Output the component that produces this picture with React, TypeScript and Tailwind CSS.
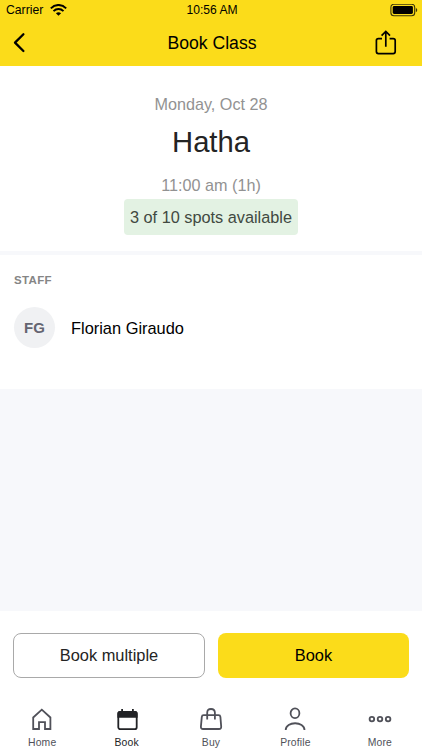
import type { ReactNode } from 'react'

type TabProps = {
  label: string
  active?: boolean
  children: ReactNode
}

function Tab({ label, active, children }: TabProps) {
  return (
    <button
      className={`flex flex-1 flex-col items-center ${active ? 'text-[#222326]' : 'text-[#505159]'}`}
    >
      <svg viewBox="0 0 28 28" className="h-7 w-7" fill="none" stroke="currentColor" strokeWidth="1.8">
        {children}
      </svg>
      <span className="mt-[2px] text-[10.4px] leading-4 tracking-[0.15px]">{label}</span>
    </button>
  )
}

function StatusBar() {
  return (
    <div className="flex h-5 items-center justify-between pl-[6px] pr-1">
      <div className="flex flex-1 items-center text-[12.2px]">
        Carrier
        <svg viewBox="0 0 17 12" className="ml-[7px] h-3 w-[17px]" fill="none" stroke="#000" strokeWidth="1.9">
          <path d="M0.8 4.3C5.2 -0.2 11.8 -0.2 16.2 4.3" />
          <path d="M3.5 7.1C6.4 4.2 10.6 4.2 13.5 7.1" />
          <path d="M5.9 9.2C7.5 7.8 9.5 7.8 11.1 9.2L8.5 11.8Z" fill="#000" stroke="none" />
        </svg>
      </div>
      <div className="text-[12.1px]">10:56 AM</div>
      <div className="flex flex-1 justify-end">
        <svg viewBox="0 0 28 13" className="h-[13px] w-7">
          <rect x="0.9" y="0.3" width="23.8" height="11.4" rx="3" fill="none" stroke="#3b3509" strokeWidth="1.1" />
          <rect x="2.7" y="2" width="20.2" height="8" rx="1.4" fill="#000" />
          <path d="M25.9 3.9C27.7 4.5 27.7 7.5 25.9 8.1Z" fill="#3b3509" />
        </svg>
      </div>
    </div>
  )
}

export default function App() {
  return (
    <div className="flex h-[750px] w-[422px] flex-col overflow-hidden bg-[#f7f8fb] font-['Liberation_Sans',Arial,sans-serif] text-black">
      <header className="h-[66px] shrink-0 bg-[#fbdc1a]">
        <StatusBar />
        <div className="flex h-[46px] items-center justify-between">
          <button className="w-[82px] pl-3">
            <svg viewBox="0 0 16 22" className="h-[22px] w-4" fill="none" stroke="#000" strokeWidth="2.3">
              <path d="M11.4 2.2L3 10.6L11.4 19" strokeLinecap="round" strokeLinejoin="round" />
            </svg>
          </button>
          <h1 className="text-[17.6px]">Book Class</h1>
          <button className="flex w-20 justify-end pr-[25px]">
            <svg viewBox="0 0 22 26" className="h-[26px] w-[22px]" fill="none" stroke="#000" strokeWidth="1.7">
              <path d="M7 8.6H3.4Q1.4 8.6 1.4 10.6V21.6Q1.4 23.6 3.4 23.6H18.2Q20.2 23.6 20.2 21.6V10.6Q20.2 8.6 18.2 8.6H14.6" />
              <path d="M10.8 16.8V1.8M6.6 5.7L10.8 1.5L15 5.7" />
            </svg>
          </button>
        </div>
      </header>

      <section className="flex h-[185px] shrink-0 flex-col items-center bg-white pt-7">
        <p className="text-[16.2px] leading-5 text-[#929292]">Monday, Oct 28</p>
        <h2 className="mt-[10px] text-[29.2px] leading-9 text-[#242424]">Hatha</h2>
        <p className="mt-[15px] text-[16.2px] leading-5 text-[#929292]">11:00 am (1h)</p>
        <p className="mt-1 h-[36px] w-[174px] rounded-[4px] bg-[#e3f2e3] text-center text-[16.3px] leading-9 whitespace-nowrap text-[#414941]">
          3 of 10 spots available
        </p>
      </section>

      <section className="mt-1 h-[134px] shrink-0 bg-white px-[14px] pt-[17px]">
        <h3 className="text-[11.5px] leading-4 font-bold tracking-[0.35px] text-[#858585]">STAFF</h3>
        <div className="mt-[19px] flex items-center">
          <div className="flex h-[41px] w-[41px] items-center justify-center rounded-full bg-[#f0f1f3] pt-[2px] text-[15px] font-bold text-[#646571]">
            FG
          </div>
          <span className="ml-4 pt-[2px] text-[16.4px]">Florian Giraudo</span>
        </div>
      </section>

      <footer className="mt-auto h-[139px] shrink-0 bg-white">
        <div className="flex gap-[13px] px-[13px] pt-[22px] text-[16.4px]">
          <button className="h-[45px] w-[192px] rounded-lg border border-[#a9a9a9] text-[#242424]">
            Book multiple
          </button>
          <button className="h-[45px] w-[191px] rounded-lg bg-[#fbdc1a]">Book</button>
        </div>
        <nav className="mt-[27px] flex">
          <Tab label="Home">
            <path d="M5.2 12.5L13.8 4.6L22.4 12.5V24H17V17.2H11V24H5.2Z" />
          </Tab>
          <Tab label="Book" active>
            <rect x="5.3" y="6.9" width="18.4" height="17.3" rx="2" />
            <path
              d="M4.4 8.5Q4.4 6 6.9 6H8.2V4H10V6H19V4H20.8V6H22.1Q24.6 6 24.6 8.5V12.8H4.4Z"
              fill="currentColor"
              stroke="none"
            />
          </Tab>
          <Tab label="Buy">
            <path d="M6.6 10.2H21.5Q23.2 10.2 23.4 11.9L24.2 21.6Q24.3 24 22.1 24H6Q3.8 24 3.9 21.6L4.8 11.9Q5 10.2 6.6 10.2Z" />
            <path d="M10.2 14.6V7.8Q10.2 4 14 4Q17.9 4 17.9 7.8V14.6" />
          </Tab>
          <Tab label="Profile">
            <ellipse cx="14" cy="8.3" rx="4.4" ry="4.9" />
            <path d="M4.7 25C4.7 16 23.5 16 23.5 25" />
          </Tab>
          <Tab label="More">
            <circle cx="5.9" cy="14.1" r="2.3" />
            <circle cx="14" cy="14.1" r="2.3" />
            <circle cx="22.1" cy="14.1" r="2.3" />
          </Tab>
        </nav>
      </footer>
    </div>
  )
}
